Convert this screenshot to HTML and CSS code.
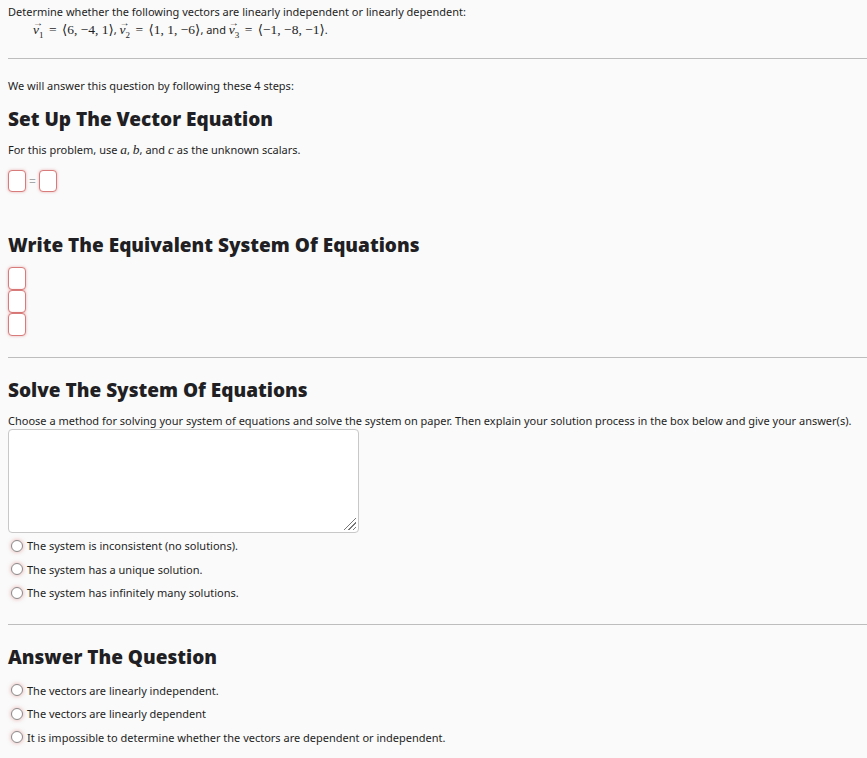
FILE: index.html
```html
<!DOCTYPE html>
<html lang="en">

<head>
    <meta charset="UTF-8">
    <title>Linear independence</title>
    <link rel="stylesheet" href="styles.css">
</head>

<body>
    <div class="page">
        <div class="prompt">
            <p>Determine whether the following vectors are linearly independent or linearly dependent:</p>
            <p class="math">
                <span class="m"><span class="vec">v</span><sub>1</sub> <span class="rel">=</span> ⟨6, −4, 1⟩</span>,
                <span class="m"><span class="vec">v</span><sub>2</sub> <span class="rel">=</span> ⟨1, 1, −6⟩</span>, and
                <span class="m"><span class="vec">v</span><sub>3</sub> <span class="rel">=</span> ⟨−1, −8, −1⟩</span>.
            </p>
        </div>
        <hr>
        <p class="intro">We will answer this question by following these 4 steps:</p>

        <h2 class="step">Set Up The Vector Equation</h2>
        <p class="note">For this problem, use <i class="mi">a</i>, <i class="mi">b</i>, and <i class="mi">c</i> as the unknown scalars.</p>
        <div class="equation">
            <span class="blank"></span>
            <span class="eq">=</span>
            <span class="blank"></span>
        </div>

        <h2 class="step step-gap">Write The Equivalent System Of Equations</h2>
        <div class="system">
            <span class="blank"></span>
            <span class="blank"></span>
            <span class="blank"></span>
        </div>
        <hr class="rule-sys">

        <h2 class="step">Solve The System Of Equations</h2>
        <p class="note">Choose a method for solving your system of equations and solve the system on paper. Then explain your solution process in the box below and give your answer(s).</p>
        <div class="work-box">
            <textarea class="work"></textarea>
            <span class="grip"></span>
        </div>
        <ul class="choices">
            <li><label><input type="radio" name="sol"> The system is inconsistent (no solutions).</label></li>
            <li><label><input type="radio" name="sol"> The system has a unique solution.</label></li>
            <li><label><input type="radio" name="sol"> The system has infinitely many solutions.</label></li>
        </ul>
        <hr class="rule-ans">

        <h2 class="step">Answer The Question</h2>
        <ul class="choices answer">
            <li><label><input type="radio" name="ans"> The vectors are linearly independent.</label></li>
            <li><label><input type="radio" name="ans"> The vectors are linearly dependent</label></li>
            <li><label><input type="radio" name="ans"> It is impossible to determine whether the vectors are dependent or independent.</label></li>
        </ul>
    </div>
</body>

</html>
```

FILE: styles.css
```css
body {
    margin: 0;
    background: #fafafa;
    color: #1e1e1e;
    font-family: "Noto Sans", "Open Sans", sans-serif;
    font-size: 11px;
}

p,
h2,
ul {
    margin: 0;
    padding: 0;
}

.page {
    padding-left: 8px;
}

.prompt {
    padding-top: 4px;
}

.prompt p {
    line-height: 16px;
}

.prompt .math {
    line-height: 20px;
    padding-left: 25px;
}

.m {
    font-family: "Liberation Serif", "DejaVu Serif", serif;
    font-size: 13.5px;
}

.rel {
    margin: 0 2px;
}

.vec,
.mi {
    font-family: "Liberation Serif", "DejaVu Serif", serif;
    font-style: italic;
    font-size: 13.5px;
    position: relative;
}

.vec::after {
    content: "\2192";
    position: absolute;
    left: 0;
    top: -9px;
    font-style: normal;
    font-size: 10px;
}

.m sub {
    font-size: 9px;
    line-height: 0;
}

hr {
    margin: 18px 0 0 0;
    border: 0;
    border-top: 1px solid #bdbdbd;
    height: 0;
}

.intro {
    line-height: 16px;
    margin-top: 19px;
}

.step {
    font-family: "Noto Sans", sans-serif;
    font-weight: 900;
    font-size: 19px;
    line-height: 24px;
    margin-top: 13px;
    color: #1f1f24;
}

.note {
    line-height: 16px;
    margin-top: 11px;
}

.equation {
    display: flex;
    align-items: center;
    margin-top: 12px;
}

.blank {
    display: block;
    width: 16px;
    height: 20px;
    background: #fff;
    border: 1px solid #d77b7b;
    border-radius: 4px;
    box-shadow: 0 0 3px rgba(214, 90, 90, .45);
}

.eq {
    color: #a8a8a8;
    font-size: 12px;
    margin: 0 3px;
}

.step-gap {
    margin-top: 41px;
}

.system {
    display: flex;
    flex-direction: column;
    align-items: flex-start;
    margin-top: 10px;
}

.system .blank {
    height: 21px;
}

.rule-sys {
    margin-top: 21px;
}

.rule-sys+.step,
.rule-ans+.step {
    margin-top: 20px;
}

.work-box {
    position: relative;
    width: 351px;
    height: 104px;
}

.work {
    display: block;
    width: 100%;
    height: 100%;
    box-sizing: border-box;
    margin: 0;
    background: #fff;
    border: 1px solid #c8c8c8;
    border-radius: 4px;
    resize: none;
}

.grip {
    position: absolute;
    right: 3px;
    bottom: 3px;
    width: 14px;
    height: 14px;
    background: repeating-linear-gradient(135deg, transparent 0, transparent 2px, #777 2px, #777 3px);
    clip-path: polygon(100% 0, 100% 100%, 0 100%);
}

.choices {
    list-style: none;
    margin-top: 1px;
}

.choices li {
    height: 23.5px;
    line-height: 23.5px;
}

.choices label {
    display: flex;
    align-items: center;
}

.choices input {
    -webkit-appearance: none;
    appearance: none;
    width: 12px;
    height: 12px;
    margin: 0 4px 0 3px;
    border: 1px solid #8a8a8a;
    border-radius: 50%;
    background: #fff;
    box-shadow: 0 0 4px rgba(214, 90, 90, .5);
}

.rule-ans {
    margin-top: 19px;
}

.answer {
    margin-top: 10px;
}
```
